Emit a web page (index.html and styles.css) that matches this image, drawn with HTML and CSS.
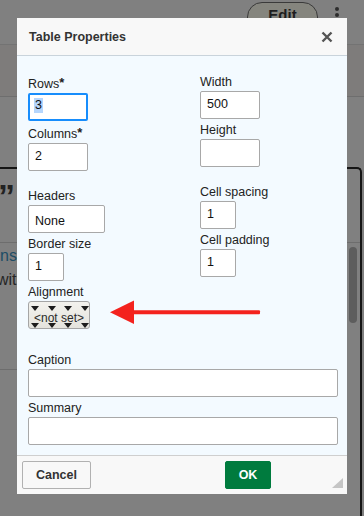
FILE: index.html
```html
<!DOCTYPE html>
<html lang="en">
<head>
<meta charset="utf-8">
<title>Table Properties</title>
<link rel="stylesheet" href="styles.css">
</head>
<body>
<div class="page">
  <div class="topbar">
    <div class="edit-btn">Edit</div>
    <div class="kebab"><i></i><i></i><i></i></div>
  </div>
  <div class="band"></div>
  <div class="gap"></div>
  <div class="card">
    <div class="quote">&rdquo;</div>
    <div class="divider"></div>
    <div class="line link">ns</div>
    <div class="line text">with</div>
    <div class="divider short"></div>
    <div class="thumb"></div>
  </div>
</div>

<div class="dialog">
  <div class="dlg-head">
    <div class="dlg-title">Table Properties</div>
    <svg class="close" width="12" height="12" viewBox="0 0 12 12"><path d="M1.5 1.5 L10.5 10.5 M10.5 1.5 L1.5 10.5" stroke="#555" stroke-width="2.4" stroke-linecap="butt"/></svg>
  </div>
  <div class="dlg-body">
    <div class="cols">
      <div class="col col-left">
        <div class="group">
          <div class="field">
            <div class="label req">Rows<span class="ast">*</span></div>
            <div class="input focus w60"><span class="sel">3</span></div>
          </div>
          <div class="field">
            <div class="label req">Columns<span class="ast">*</span></div>
            <div class="input w60">2</div>
          </div>
        </div>
        <div class="group">
          <div class="field">
            <div class="label">Headers</div>
            <div class="input select w77">None</div>
          </div>
          <div class="field">
            <div class="label">Border size</div>
            <div class="input w36">1</div>
          </div>
          <div class="field">
            <div class="label">Alignment</div>
            <div class="align">
              <div class="tris"><b></b><b></b><b></b><b></b></div>
              <div class="align-text">&lt;not set&gt;</div>
              <div class="tris bottom"><b></b><b></b><b></b><b></b></div>
            </div>
          </div>
        </div>
      </div>
      <div class="col col-right">
        <div class="group">
          <div class="field">
            <div class="label">Width</div>
            <div class="input w60">500</div>
          </div>
          <div class="field">
            <div class="label">Height</div>
            <div class="input w60"></div>
          </div>
        </div>
        <div class="group">
          <div class="field">
            <div class="label">Cell spacing</div>
            <div class="input w36">1</div>
          </div>
          <div class="field">
            <div class="label">Cell padding</div>
            <div class="input w36">1</div>
          </div>
        </div>
      </div>
    </div>
    <div class="wide">
      <div class="field">
        <div class="label">Caption</div>
        <div class="input full"></div>
      </div>
      <div class="field">
        <div class="label">Summary</div>
        <div class="input full"></div>
      </div>
    </div>
    <svg class="arrow" width="160" height="32" viewBox="0 0 160 32">
      <rect x="22" y="14.3" width="131" height="4" rx="1" fill="#f3221e"/>
      <polygon points="3,16.3 27,4.5 27,28" fill="#f3221e"/>
    </svg>
  </div>
  <div class="dlg-foot">
    <div class="btn cancel">Cancel</div>
    <div class="btn ok">OK</div>
    <div class="grip"></div>
  </div>
</div>
</body>
</html>
```

FILE: styles.css
```css
html, body {
  margin: 0;
  padding: 0;
  background: #808080;
}
body {
  width: 364px;
  height: 516px;
  overflow: hidden;
  position: relative;
  font-family: "Liberation Sans", Arial, sans-serif;
}

/* background page (dimmed) */
.page {
  width: 364px;
}
.topbar {
  height: 44px;
  border-bottom: 1px solid #737373;
  box-sizing: content-box;
  display: flex;
  justify-content: flex-end;
  align-items: flex-start;
  padding-right: 23px;
  gap: 15px;
}
.edit-btn {
  margin-top: 2px;
  width: 71px;
  height: 36px;
  box-sizing: border-box;
  border: 1.5px solid #3a3a3a;
  border-radius: 15px;
  background: #85857e;
  color: #1e1e1e;
  font-weight: bold;
  font-size: 15px;
  line-height: 18px;
  text-align: center;
  padding-top: 3px;
}
.kebab {
  margin-top: 7px;
  width: 8px;
  display: flex;
  flex-direction: column;
  align-items: center;
  gap: 2px;
}
.kebab i {
  display: block;
  width: 4px;
  height: 4px;
  border-radius: 50%;
  background: #2c2c2c;
}
.band {
  height: 51px;
  background: #7e7c7b;
  border-bottom: 1px solid #6e6e6e;
}
.gap {
  height: 70px;
}
.card {
  position: relative;
  margin-left: -10px;
  width: 372px;
  height: 360px;
  box-sizing: border-box;
  border-top: 2px solid #151515;
  border-right: 2px solid #151515;
  border-top-right-radius: 5px;
}
.quote {
  margin-top: 10px;
  padding-left: 8px;
  font-size: 34px;
  line-height: 34px;
  font-weight: bold;
  color: #222;
}
.divider {
  margin-top: 29px;
  height: 1px;
  background: #6d6d6d;
}
.divider.short {
  margin-top: 77px;
  width: 40px;
}
.line {
  font-size: 16px;
  line-height: 24px;
}
.link {
  margin-top: 1px;
  padding-left: 10px;
  color: #1d4d66;
}
.text {
  padding-left: 7px;
  color: #262626;
}
.thumb {
  position: absolute;
  right: 3px;
  top: 78px;
  width: 8px;
  height: 76px;
  border-radius: 4px;
  background: #5d5d5d;
}

/* dialog */
.dialog {
  position: absolute;
  left: 17px;
  top: 18px;
  width: 330px;
  height: 476px;
  display: flex;
  flex-direction: column;
  color: #222;
}
.dlg-head {
  height: 37px;
  flex: none;
  box-sizing: content-box;
  border-bottom: 1px solid #c9d3db;
  background: #f8f8f8;
  display: flex;
  align-items: center;
  justify-content: space-between;
  padding: 0 14px 0 12px;
}
.dlg-title {
  font-weight: bold;
  font-size: 12.5px;
  color: #333;
}
.close {
  display: block;
}
.dlg-body {
  position: relative;
  height: 399px;
  flex: none;
  box-sizing: border-box;
  background: #f3faff;
  padding: 19px 9px 0 11px;
}
.cols {
  display: flex;
}
.col-left {
  width: 172px;
}
.group + .group {
  margin-top: 18px;
}
.field + .field {
  margin-top: 4px;
}
.label {
  font-size: 12.5px;
  line-height: 14px;
  padding-bottom: 2px;
  color: #222;
  white-space: nowrap;
}
.label.req {
  padding-top: 2px;
}
.ast {
  font-weight: bold;
  font-size: 13px;
  position: relative;
  top: -1px;
}
.input {
  height: 28px;
  box-sizing: border-box;
  border: 1px solid #a8a8a8;
  border-radius: 2px;
  background: #fff;
  font-size: 12.5px;
  line-height: 24px;
  padding-left: 6px;
  color: #111;
}
.input.focus {
  border: 2px solid #178dfc;
  padding-left: 5px;
  display: flex;
  align-items: center;
  padding-bottom: 4px;
}
.sel {
  display: inline-block;
  height: 15px;
  line-height: 15px;
  background: #b5d6fd;
  padding: 0 1px;
  margin-left: -1px;
}
.input.select {
  padding-top: 3px;
}
.w60 { width: 60px; }
.w77 { width: 77px; }
.w36 { width: 36px; }
.full { width: 310px; }

.align {
  width: 62px;
  height: 28px;
  box-sizing: border-box;
  border: 1px solid #a5a5a5;
  border-radius: 3px;
  background: linear-gradient(#f3f2ed, #e4e3dd);
  display: flex;
  flex-direction: column;
}
.tris {
  margin-top: 4px;
  height: 5px;
  display: flex;
  justify-content: space-between;
  padding-left: 2px;
}
.tris.bottom {
  margin-top: -2px;
}
.tris b {
  display: block;
  width: 0;
  height: 0;
  border-left: 4.5px solid transparent;
  border-right: 4.5px solid transparent;
  border-top: 5px solid #1c1c1c;
}
.align-text {
  font-size: 12px;
  line-height: 14px;
  height: 14px;
  text-align: center;
  color: #2a2a2a;
}
.wide {
  margin-top: 24px;
}
.arrow {
  position: absolute;
  left: 90px;
  top: 240px;
}

.dlg-foot {
  position: relative;
  flex: none;
  height: 39px;
  box-sizing: border-box;
  border-top: 1px solid #cfcfcf;
  background: #f8f8f8;
  display: flex;
  align-items: center;
  padding-left: 5px;
  gap: 134px;
}
.btn {
  height: 28px;
  box-sizing: border-box;
  border-radius: 2px;
  font-weight: bold;
  font-size: 12.5px;
  line-height: 26px;
  text-align: center;
}
.cancel {
  width: 69px;
  border: 1px solid #b1b1b1;
  background: #f8f8f8;
  color: #333;
}
.ok {
  width: 46px;
  border: 1px solid #007b3e;
  background: #007b3e;
  color: #fff;
}
.grip {
  position: absolute;
  right: 4px;
  bottom: 6px;
  width: 0;
  height: 0;
  border-left: 11px solid transparent;
  border-bottom: 10px solid #c5c5c5;
}
```
